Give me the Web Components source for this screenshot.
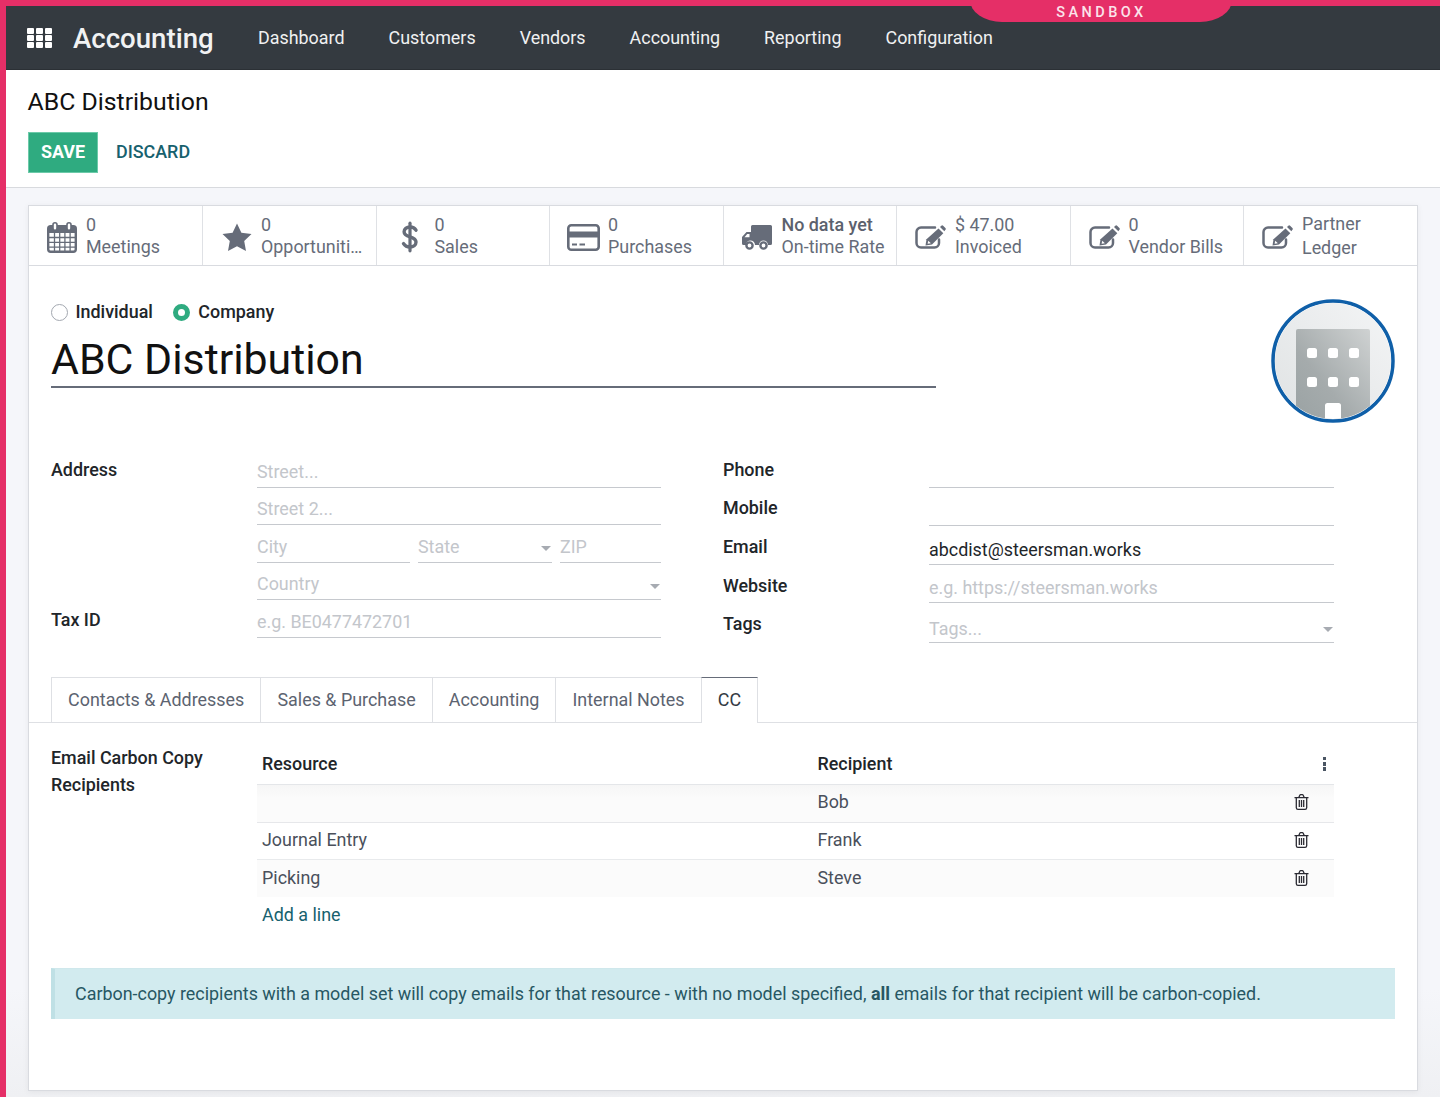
<!DOCTYPE html>
<html lang="en"><head><meta charset="utf-8"><title>ABC Distribution</title>
<style>
html,body{margin:0;padding:0;height:1097px;overflow:hidden;background:#f5f6fa}
body{font:17.9px/24px Roboto,"Liberation Sans",sans-serif;color:#212529}
</style></head><body>
<x-app>
  <x-navbar slot="nav" brand="Accounting" items="Dashboard|Customers|Vendors|Accounting|Reporting|Configuration"></x-navbar>
  <x-control-panel slot="panel" title="ABC Distribution"></x-control-panel>
  <x-sheet slot="sheet">
    <x-stat-bar slot="stats">
      <x-stat icon="calendar" value="0" label="Meetings"></x-stat>
      <x-stat icon="star" value="0" label="Opportuniti…"></x-stat>
      <x-stat icon="dollar" value="0" label="Sales"></x-stat>
      <x-stat icon="card" value="0" label="Purchases"></x-stat>
      <x-stat icon="truck" value="No data yet" label="On-time Rate" strong></x-stat>
      <x-stat icon="edit" value="$ 47.00" label="Invoiced"></x-stat>
      <x-stat icon="edit" value="0" label="Vendor Bills"></x-stat>
      <x-stat icon="edit" value="Partner" label="Ledger" wide></x-stat>
    </x-stat-bar>
    <x-title-block slot="title" name="ABC Distribution"></x-title-block>
    <x-avatar slot="avatar"></x-avatar>
    <x-address-form slot="form"></x-address-form>
    <x-tabs slot="tabs" items="Contacts &amp; Addresses|Sales &amp; Purchase|Accounting|Internal Notes|CC" active="4"></x-tabs>
    <x-cc-table slot="table">
      <x-cc-row recipient="Bob" tone="first"></x-cc-row>
      <x-cc-row resource="Journal Entry" recipient="Frank"></x-cc-row>
      <x-cc-row resource="Picking" recipient="Steve" tone="alt"></x-cc-row>
    </x-cc-table>
    <x-alert slot="alert">Carbon-copy recipients with a model set will copy emails for that resource - with no model specified, <b>all</b> emails for that recipient will be carbon-copied.</x-alert>
  </x-sheet>
</x-app>
<script>
const ICONS={
calendar:`<svg width="30" height="31" viewBox="0 0 30 31"><rect x="1.2" y="4.2" width="27.6" height="25.6" rx="2.5" fill="none" stroke="#666c79" stroke-width="2.4"/><rect x="1.2" y="4.5" width="27.6" height="6.5" fill="#666c79"/><g stroke="#666c79" stroke-width="1.3"><path d="M2 15.5H28M2 20.3H28M2 25.1H28M7.5 11V29M12.7 11V29M17.9 11V29M23.1 11V29"/></g><rect x="6" y="0.8" width="4" height="7.5" rx="2" fill="#fff" stroke="#666c79" stroke-width="1.6"/><rect x="20" y="0.8" width="4" height="7.5" rx="2" fill="#fff" stroke="#666c79" stroke-width="1.6"/></svg>`,
star:`<svg width="30" height="29" viewBox="0 0 30 29"><path fill="#666c79" d="M15 0.5l4.4 9.2 10.1 1.4-7.3 7 1.8 10-9-4.8-9 4.8 1.8-10-7.3-7 10.1-1.4z"/></svg>`,
dollar:`<svg width="18" height="32" viewBox="0 0 18 32"><path fill="none" stroke="#666c79" stroke-width="3.4" stroke-linecap="round" d="M15 9.2C13.700 7 11.500 6 9 6 5.500 6 3.100 7.900 3.100 10.700c0 6.600 11.900 3.700 11.900 10.400 0 3-2.600 4.900-6 4.900-2.800 0-5.100-1.200-6.500-3.400"/><path stroke="#666c79" stroke-width="3.200" stroke-linecap="round" d="M9 2.200V29.800"/></svg>`,
card:`<svg width="33" height="27" viewBox="0 0 33 27"><rect x="1.3" y="1.3" width="30.4" height="24.4" rx="3" fill="none" stroke="#666c79" stroke-width="2.6"/><rect x="1.3" y="7.5" width="30.4" height="6" fill="#666c79"/><path stroke="#666c79" stroke-width="2" d="M5 20.5H10M12.500 20.5H18"/></svg>`,
truck:`<svg width="30" height="25" viewBox="0 0 30 25"><path fill="#666c79" d="M10.500 0h18A1.500 1.500 0 0 1 30 1.500V18.500A1.500 1.500 0 0 1 28.500 20H26A4.500 4.500 0 0 0 17 20H13A4.500 4.500 0 0 0 4 20H1.500A1.500 1.500 0 0 1 0 18.500V12L4.500 7H9V1.500A1.500 1.500 0 0 1 10.500 0z"/><path fill="#fff" d="M2.500 12.200L5.200 9H7.500V12.200z"/><circle cx="7.500" cy="20.500" r="3.100" fill="#fff" stroke="#666c79" stroke-width="2.400"/><circle cx="21.500" cy="20.500" r="3.100" fill="#fff" stroke="#666c79" stroke-width="2.400"/></svg>`,
edit:`<svg width="31" height="24" viewBox="0 0 31 24"><path fill="none" stroke="#666c79" stroke-width="2.500" stroke-linecap="round" d="M20 2.500H6A4.500 4.500 0 0 0 1.500 7V18A4.500 4.500 0 0 0 6 22.500H19.500A4.500 4.500 0 0 0 24 18V14.500"/><path fill="#666c79" d="M23.500 3.500l4.800 4.800L17 19.600l-6.500 1 1-6.300z"/><path fill="#fff" d="M13.300 15.800l2.600 2.500-3.300.5z"/><path fill="#666c79" d="M25 2l1.300-1.300a1.300 1.300 0 0 1 1.800 0l2.300 2.300a1.300 1.300 0 0 1 0 1.800L29.300 6.200z"/></svg>`,
trash:`<svg width="15" height="16" viewBox="0 0 15 16"><path fill="none" stroke="#2b2b33" stroke-width="1.300" d="M0.500 3.600H14.500M2.300 3.600V13.700A1.700 1.700 0 0 0 4 15.300H11A1.700 1.700 0 0 0 12.700 13.700V3.600M4.800 3.600L5.800 1.200A1 1 0 0 1 6.600 0.700H8.400A1 1 0 0 1 9.200 1.200L10.200 3.600"/><path stroke="#2b2b33" stroke-width="1.300" d="M5.300 6V13M7.500 6V13M9.700 6V13"/></svg>`
};
function def(name,css,html){
  customElements.define(name,class extends HTMLElement{
    constructor(){super();this.attachShadow({mode:'open'})}
    connectedCallback(){
      const a=n=>this.getAttribute(n);
      this.shadowRoot.innerHTML=`<style>${css}</style>`+(typeof html==='function'?html(a,this):html);
    }
  });
}
const esc=s=>(s||'').replace(/&/g,'&amp;').replace(/</g,'&lt;');
def('x-app',`
:host{display:block;height:1097px;box-sizing:border-box;border-left:6px solid #e52f67;border-top:6px solid #e52f67;position:relative;background:linear-gradient(#f5f6fa 90%,#eff0f3)}
.ribbon{position:absolute;top:-6px;left:964px;width:262px;height:22px;background:#e52f67;border-radius:0 0 32px 32px/0 0 22px 22px;color:#fbe3ea;font-size:14.500px;font-weight:500;letter-spacing:3.450px;line-height:25px;text-align:center;padding-left:1px;box-sizing:border-box}
`,`<slot name="nav"></slot><div class="ribbon">SANDBOX</div><slot name="panel"></slot><slot name="sheet"></slot>`);
def('x-navbar',`
:host{display:flex;align-items:center;height:64px;background:#343a40;box-shadow:inset 0 -1px 0 #2b3035;color:#f1f2f3;box-sizing:border-box;padding-left:21px}
.apps{display:grid;grid-template-columns:repeat(3,7px);grid-auto-rows:5.500px;gap:1.500px 1.800px;width:25px}
.apps i{background:#fff;border-radius:1px}
.brand{font-size:27.600px;font-weight:500;margin-left:21px;width:185px;padding-top:1px}
nav{display:flex;gap:44px}
nav span{color:#f0f1f2}
`,(a)=>`<div class="apps">${'<i></i>'.repeat(9)}</div><div class="brand">${esc(a('brand'))}</div><nav>${a('items').split('|').map(t=>`<span>${esc(t)}</span>`).join('')}</nav>`);
def('x-control-panel',`
:host{display:block;height:118px;box-sizing:border-box;background:#fff;border-bottom:1px solid #d8dade;padding:17px 0 0 22px}
h1{margin:0 0 0 -.5px;font-size:24.800px;font-weight:400;line-height:30px;color:#111}
.btns{display:flex;align-items:center;margin-top:15px}
.save{height:41px;width:70px;box-sizing:border-box;background:#2fab80;border:1px solid #6ccaa9;color:#fff;font-weight:700;display:flex;align-items:center;justify-content:center;padding-bottom:2px}
.disc{margin-left:18px;color:#17616e;font-weight:500;padding-bottom:2px}
`,(a)=>`<h1>${esc(a('title'))}</h1><div class="btns"><div class="save">SAVE</div><div class="disc">DISCARD</div></div>`);
def('x-sheet',`
:host{display:block;box-sizing:border-box;margin:17px 22px 0 22px;height:886px;background:#fff;border:1px solid #d9dbe0;box-shadow:0 1px 6px rgba(0,0,0,.06);position:relative}
.av{position:absolute;top:93px;right:22px}
`,`<slot name="stats"></slot><slot name="title"></slot><div class="av"><slot name="avatar"></slot></div><slot name="form"></slot><slot name="tabs"></slot><slot name="table"></slot><slot name="alert"></slot>`);
def('x-stat-bar',`
:host{display:grid;grid-template-columns:repeat(8,173.500px);height:60px;box-sizing:border-box;border-bottom:1px solid #d9dbe0;padding-left:.5px;overflow:hidden}
`,`<slot></slot>`);
def('x-stat',`
:host{display:flex;align-items:center;box-sizing:border-box;border-right:1px solid #dfe1e5;min-width:0;color:#666c79}
:host(:last-child){border-right:0}
:host(:first-child) .i{width:56.500px}
.i{width:58px;flex:none;display:flex;justify-content:center;padding-left:9px;box-sizing:border-box;margin-top:3px}
.t{min-width:0;line-height:22px;flex:1}
.t div{white-space:nowrap}
:host([wide]) .t{line-height:24px}
:host([strong]) .v{font-weight:500;color:#5b616d}
`,(a)=>`<div class="i">${ICONS[a('icon')]}</div><div class="t"><div class="v">${esc(a('value'))}</div><div>${esc(a('label'))}</div></div>`);
def('x-title-block',`
:host{display:block;padding:34px 0 0 22px}
.r{display:flex;align-items:center;height:24px;color:#212529;font-weight:500}
.c{width:17px;height:17px;box-sizing:border-box;border-radius:50%;border:1.500px solid #a3a8b0;margin-right:8px;background:#fff;margin-left:-.5px}
.c.on{border:5px solid #2fab80}
.lb{margin-right:21px}
h2{margin:10px 0 0;font-weight:400;font-size:42.800px;line-height:51px;padding-bottom:1px;width:885px;border-bottom:2px solid #666c79;color:#111}
`,(a)=>`<div class="r"><span class="c"></span><span class="lb">Individual</span><span class="c on"></span><span>Company</span></div><h2>${esc(a('name'))}</h2>`);
def('x-avatar',`:host{display:block;width:124px;height:124px}svg{display:block}`,
`<svg width="124" height="124" viewBox="0 0 124 124"><defs><clipPath id="c"><circle cx="62" cy="62" r="58"/></clipPath><linearGradient id="bg" x1="1" y1="0" x2="0" y2="1"><stop offset="0" stop-color="#f4f5f6"/><stop offset="1" stop-color="#dfe2e3"/></linearGradient><linearGradient id="b" x1="1" y1="0" x2="0" y2="1"><stop offset="0" stop-color="#cfd2d2"/><stop offset=".6" stop-color="#a5abac"/><stop offset="1" stop-color="#9aa2a3"/></linearGradient></defs><circle cx="62" cy="62" r="60" fill="#fff" stroke="#0f5fa8" stroke-width="3.500"/><g clip-path="url(#c)"><rect width="124" height="124" fill="url(#bg)"/><rect x="25" y="30" width="74" height="94" rx="2" fill="url(#b)"/><g fill="#fff"><rect x="36" y="49" width="10" height="10" rx="2.500"/><rect x="57" y="49" width="10" height="10" rx="2.500"/><rect x="78" y="49" width="10" height="10" rx="2.500"/><rect x="36" y="78" width="10" height="10" rx="2.500"/><rect x="57" y="78" width="10" height="10" rx="2.500"/><rect x="78" y="78" width="10" height="10" rx="2.500"/><rect x="54" y="104" width="16" height="20" rx="2.500"/></g></g></svg>`);
def('x-address-form',`
:host{display:grid;grid-template-columns:610px 611px;column-gap:62px;padding:62px 0 0 22px}
.g{display:grid;grid-template-columns:206px 1fr;align-self:start}
.g.l{grid-auto-rows:37.500px}
.g.rt{grid-template-rows:38px 38px 39px 38px 40px}
.lbl{padding-top:8px;line-height:24px;font-weight:500;color:#212529;box-sizing:border-box}
.g.rt .lbl:nth-of-type(n+5){padding-top:9px}
.f{display:flex;align-items:flex-end;gap:8px;min-width:0}
.i{flex:1;box-sizing:border-box;border-bottom:1px solid #c6c9ce;padding-bottom:3px;line-height:24px;color:#c3c6cb;position:relative;min-width:0;height:28px}
.g.rt .i{padding-bottom:2px;height:27px}
.g.rt .i.s{padding-bottom:1px;height:26px}
.i.v{color:#212529}
.i.s::after{content:"";position:absolute;right:1px;bottom:10.500px;border:5.500px solid transparent;border-top:5.500px solid #a7abb2;border-bottom:0}
.c{flex:none;width:153px}.st{flex:none;width:134px}
`,()=>{
const i=(t,c='')=>`<div class="i ${c}">${t}</div>`;
const f=x=>`<div class="f">${x}</div>`;
return `<div class="g l">
<div class="lbl">Address</div>${f(i('Street...'))}
<div></div>${f(i('Street 2...'))}
<div></div>${f(i('City','c')+i('State','st s')+i('ZIP'))}
<div></div>${f(i('Country','s'))}
<div class="lbl">Tax ID</div>${f(i('e.g. BE0477472701'))}
</div><div class="g rt">
<div class="lbl">Phone</div>${f(i(''))}
<div class="lbl">Mobile</div>${f(i(''))}
<div class="lbl">Email</div>${f(i('abcdist@steersman.works','v'))}
<div class="lbl">Website</div>${f(i('e.g. https://steersman.works'))}
<div class="lbl">Tags</div>${f(i('Tags...','s'))}
</div>`});
def('x-tabs',`
:host{display:flex;margin-top:34px;padding-left:22px;height:46px;box-sizing:border-box;border-bottom:1px solid #dee0e4}
span{box-sizing:border-box;height:45px;padding:0 16.100px;line-height:44px;border:1px solid #dee0e4;border-bottom:0;border-right:0;color:#5c6370;white-space:nowrap;background:#fff}
span.a{color:#333a44;border:1px solid #dee0e4;border-top:1.500px solid #666c79;border-bottom:0;height:46px;position:relative}
`,(a)=>a('items').split('|').map((t,n)=>`<span class="${n==a('active')?'a':''}">${esc(t)}</span>`).join(''));
def('x-cc-table',`
:host{display:grid;grid-template-columns:206px 1077px;padding:22.500px 0 0 22px}
.lb{font-weight:500;line-height:27px;color:#212529;margin-top:-2px}
.h{display:flex;height:39px;align-items:center;font-weight:500;border-bottom:1px solid #e4e6e9;box-sizing:border-box;color:#212529;padding-bottom:1.500px}
.h span:first-child{width:560.500px;padding-left:5px;box-sizing:border-box}
.h span:nth-child(2){flex:1}
.dots{width:20px;display:grid;gap:1.800px;justify-items:start;margin-right:2.500px}
.dots i{width:3.600px;height:3.600px;background:#4a5563;display:block;margin-left:11px}
.add{color:#17616e;padding:6px 0 0 5px;line-height:24px}
`,`<div class="lb">Email Carbon Copy<br>Recipients</div><div><div class="h"><span>Resource</span><span>Recipient</span><div class="dots"><i></i><i></i><i></i></div></div><slot></slot><div class="add">Add a line</div></div>`);
def('x-cc-row',`
:host{display:flex;height:37px;align-items:center;box-sizing:border-box;border-bottom:1px solid #e8eaec;color:#4a505b;padding-bottom:1.500px}
:host([tone=first]){height:38px;background:linear-gradient(#f6f6f6,#fbfbfb 35%);border-bottom:1px solid #e6e7ea}
:host([tone=alt]){height:37.500px;background:#fbfbfb;border-bottom:0;padding-bottom:0}
.a{width:560.500px;padding-left:5px;box-sizing:border-box}
.b{flex:1}
.t{width:40.500px;display:flex}
`,(a)=>`<div class="a">${esc(a('resource'))}</div><div class="b">${esc(a('recipient'))}</div><div class="t">${ICONS.trash}</div>`);
def('x-alert',`
:host{display:block;margin:41px 22px 0 22px;height:51px;box-sizing:border-box;background:#d2ebef;border-left:4px solid #bfe0e5;border-top:1px solid #cfe8ec;padding:12px 0 0 20px;color:#275763;line-height:26px;white-space:nowrap}
`,`<slot></slot>`);
</script>
</body></html>
